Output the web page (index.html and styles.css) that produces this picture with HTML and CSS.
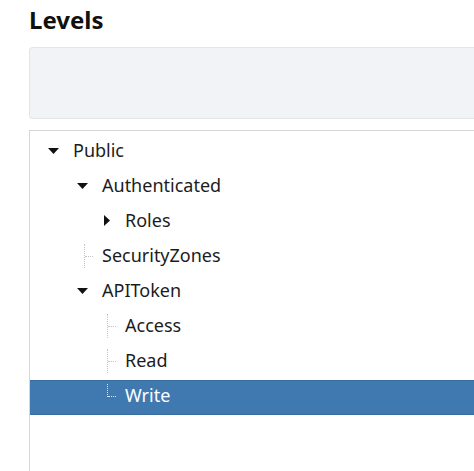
FILE: index.html
```html
<!DOCTYPE html>
<html lang="en">
<head>
    <meta charset="UTF-8">
    <meta name="viewport" content="width=device-width, initial-scale=1.0">
    <title>Levels</title>
    <link rel="stylesheet" href="styles.css">
</head>
<body>

    <div class="page">
        <h1 class="title">Levels</h1>
        <div class="toolbar"></div>

        <div class="tree">
            <div class="node level0">
                <span class="toggle"><svg width="11" height="6" viewBox="0 0 11 6"><path d="M0 0 H11 L5.5 6 Z" fill="#111"/></svg></span>
                <span class="label">Public</span>
            </div>
            <div class="node level1">
                <span class="toggle"><svg width="11" height="6" viewBox="0 0 11 6"><path d="M0 0 H11 L5.5 6 Z" fill="#111"/></svg></span>
                <span class="label">Authenticated</span>
            </div>
            <div class="node level2">
                <span class="toggle closed"><svg width="6" height="11" viewBox="0 0 6 11"><path d="M0 0 V11 L6 5.5 Z" fill="#111"/></svg></span>
                <span class="label">Roles</span>
            </div>
            <div class="node level1">
                <span class="toggle leaf"><span class="line"></span><span class="dash"></span></span>
                <span class="label">SecurityZones</span>
            </div>
            <div class="node level1">
                <span class="toggle"><svg width="11" height="6" viewBox="0 0 11 6"><path d="M0 0 H11 L5.5 6 Z" fill="#111"/></svg></span>
                <span class="label">APIToken</span>
            </div>
            <div class="node level2">
                <span class="toggle leaf"><span class="line"></span><span class="dash"></span></span>
                <span class="label">Access</span>
            </div>
            <div class="node level2">
                <span class="toggle leaf"><span class="line"></span><span class="dash"></span></span>
                <span class="label">Read</span>
            </div>
            <div class="node level2 selected">
                <span class="toggle leaf last"><span class="line"></span><span class="dash"></span></span>
                <span class="label">Write</span>
            </div>
        </div>
    </div>

</body>
</html>
```

FILE: styles.css
```css
body {
    font-family: "Noto Sans", "Open Sans", sans-serif;
    color: #1c1c1c;
    background-color: #ffffff;
    margin: 0;
    padding: 0;
    overflow: hidden;
}
.page {
    padding-left: 29px;
}
.title {
    font-size: 24px;
    font-weight: bold;
    line-height: 32px;
    margin: 0;
    padding-top: 4px;
    color: #111;
}
.toolbar {
    height: 70px;
    margin-top: 11px;
    background-color: #f2f3f7;
    border: 1px solid #e2e4e8;
    border-right: none;
    border-radius: 4px 0 0 4px;
}
.tree {
    margin-top: 11px;
    height: 336px;
    border-top: 1px solid #d6d6d6;
    border-left: 1px solid #d6d6d6;
    padding-top: 4px;
}
.node {
    display: flex;
    align-items: flex-start;
    height: 35px;
    box-sizing: border-box;
    font-size: 18px;
    line-height: 31px;
}
.level0 { padding-left: 18px; }
.level1 { padding-left: 47px; }
.level2 { padding-left: 70px; }
.toggle {
    position: relative;
    width: 11px;
    height: 35px;
    margin-right: 14px;
    flex-shrink: 0;
}
.toggle svg {
    position: absolute;
    left: 0;
    top: 13px;
}
.toggle.closed svg {
    left: 4px;
    top: 10px;
}
.leaf .line {
    position: absolute;
    left: 7px;
    top: 4px;
    height: 24px;
    border-left: 1px dotted #c4c4c4;
}
.leaf .dash {
    position: absolute;
    left: 8px;
    top: 16px;
    width: 8px;
    border-top: 1px dotted #c4c4c4;
}
.leaf.last .line {
    height: 13px;
}
.node.selected {
    background-color: #3f79b0;
    border-top: 1px solid #3a6d9f;
    border-bottom: 1px solid #3a6d9f;
    color: #ffffff;
}
.node.selected .toggle {
    margin-top: -1px;
}
.node.selected .label {
    margin-top: -1px;
}
.node.selected .leaf .line,
.node.selected .leaf .dash {
    border-color: #d8e3ee;
}
```
